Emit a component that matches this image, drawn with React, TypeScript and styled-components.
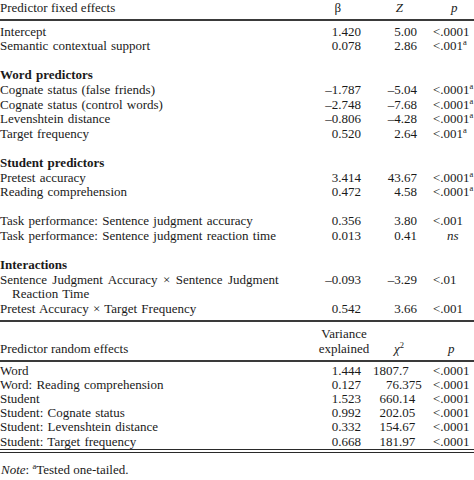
import React from "react";
import styled, { createGlobalStyle } from "styled-components";

const GlobalStyle = createGlobalStyle`
	html, body {
		margin: 0;
		padding: 0;
		background: #ffffff;
		overflow: hidden;
	}
	body {
		font-family: "Liberation Serif", "Times New Roman", serif;
		color: #1a1a1a;
	}
`;

type FixedRow =
	| { kind: "blank" }
	| { kind: "group"; label: string }
	| {
			kind: "item";
			label: string;
			cont?: string;
			beta: string;
			z: string;
			p: string;
			sup?: boolean;
			ns?: boolean;
	  };

const fixedRows: FixedRow[] = [
	{ kind: "item", label: "Intercept", beta: "1.420", z: "5.00", p: "<.0001" },
	{ kind: "item", label: "Semantic contextual support", beta: "0.078", z: "2.86", p: "<.001", sup: true },
	{ kind: "blank" },
	{ kind: "group", label: "Word predictors" },
	{ kind: "item", label: "Cognate status (false friends)", beta: "–1.787", z: "–5.04", p: "<.0001", sup: true },
	{ kind: "item", label: "Cognate status (control words)", beta: "–2.748", z: "–7.68", p: "<.0001", sup: true },
	{ kind: "item", label: "Levenshtein distance", beta: "–0.806", z: "–4.28", p: "<.0001", sup: true },
	{ kind: "item", label: "Target frequency", beta: "0.520", z: "2.64", p: "<.001", sup: true },
	{ kind: "blank" },
	{ kind: "group", label: "Student predictors" },
	{ kind: "item", label: "Pretest accuracy", beta: "3.414", z: "43.67", p: "<.0001", sup: true },
	{ kind: "item", label: "Reading comprehension", beta: "0.472", z: "4.58", p: "<.0001", sup: true },
	{ kind: "blank" },
	{ kind: "item", label: "Task performance: Sentence judgment accuracy", beta: "0.356", z: "3.80", p: "<.001" },
	{ kind: "item", label: "Task performance: Sentence judgment reaction time", beta: "0.013", z: "0.41", p: "ns", ns: true },
	{ kind: "blank" },
	{ kind: "group", label: "Interactions" },
	{
		kind: "item",
		label: "Sentence Judgment Accuracy × Sentence Judgment",
		cont: "Reaction Time",
		beta: "–0.093",
		z: "–3.29",
		p: "<.01",
	},
	{ kind: "item", label: "Pretest Accuracy × Target Frequency", beta: "0.542", z: "3.66", p: "<.001" },
];

const randomRows = [
	{ label: "Word", v: "1.444", chi: "1807.7" },
	{ label: "Word: Reading comprehension", v: "0.127", chi: "76.375" },
	{ label: "Student", v: "1.523", chi: "660.14" },
	{ label: "Student: Cognate status", v: "0.992", chi: "202.05" },
	{ label: "Student: Levenshtein distance", v: "0.332", chi: "154.67" },
	{ label: "Student: Target frequency", v: "0.668", chi: "181.97" },
];

const Page = styled.div`
	width: 480px;
	font-size: 13px;
	line-height: 14.6px;
`;

const Table = styled.table`
	width: 480px;
	table-layout: fixed;
	border-collapse: collapse;
	border-spacing: 0;
`;

const HeadRow = styled.tr<{ $tall?: boolean }>`
	border-bottom: 2px solid #3a3a3a;
	& > th {
		padding-top: ${({ $tall }) => ($tall ? "5px" : "1px")};
		padding-bottom: 3px;
	}
`;

const HeadCell = styled.th<{ $align?: "left" | "right" | "center"; $pad?: string }>`
	font-weight: normal;
	text-align: ${({ $align }) => $align ?? "left"};
	padding: ${({ $pad }) => $pad ?? "0"};
	vertical-align: bottom;
	white-space: nowrap;
	overflow: visible;
`;

const VarianceHead = styled.div`
	width: 60px;
	margin-left: 14px;
	text-align: center;
`;

const Italic = styled.i`
	font-style: italic;
`;

const Row = styled.tr<{ $top?: number; $bottom?: number; $pitch?: number }>`
	line-height: ${({ $pitch }) => $pitch ?? 14.6}px;
	& > td {
		height: ${({ $pitch }) => $pitch ?? 14.6}px;
		padding-top: ${({ $top }) => $top ?? 0}px;
		padding-bottom: ${({ $bottom }) => $bottom ?? 0}px;
	}
`;

const SectionEnd = styled.tbody<{ $double?: boolean }>`
	border-bottom: ${({ $double }) => ($double ? "4px double #2a2a2a" : "2px solid #3a3a3a")};
`;

const Label = styled.td<{ $bold?: boolean; $wide?: boolean }>`
	padding: 0;
	font-weight: ${({ $bold }) => ($bold ? "bold" : "normal")};
	white-space: nowrap;
	vertical-align: top;
	word-spacing: ${({ $wide }) => ($wide ? "2.2px" : "1px")};
`;

const Continuation = styled.div`
	padding-left: 12px;
	word-spacing: 1px;
`;

const Num = styled.td`
	padding: 0;
	text-align: right;
	white-space: nowrap;
	vertical-align: top;
`;

const PCell = styled.td<{ $ns?: boolean }>`
	padding: 0;
	padding-left: ${({ $ns }) => ($ns ? "30px" : "16px")};
	font-style: ${({ $ns }) => ($ns ? "italic" : "normal")};
	white-space: nowrap;
	vertical-align: top;
`;

const Sup = styled.sup`
	font-size: 8.5px;
	line-height: 0;
	vertical-align: 5px;
`;

const FracPart = styled.span`
	display: inline-block;
	width: 18px;
	text-align: left;
`;

const Note = styled.div`
	padding-top: 10px;
	padding-left: 1px;
	line-height: 14px;
`;

const Decimal = ({ value }: { value: string }) => {
	const [int, frac] = value.split(".");
	return (
		<Num>
			{int}
			<FracPart>.{frac}</FracPart>
		</Num>
	);
};

export default function App() {
	const lastItem = fixedRows.length - 1;
	const pad = (i: number, last: number, top: number, bottom: number) => ({
		$top: i === 0 ? top : 0,
		$bottom: i === last ? bottom : 0,
	});
	return (
		<Page>
			<GlobalStyle />
			<Table>
				<colgroup>
					<col style={{ width: 300 }} />
					<col style={{ width: 61 }} />
					<col style={{ width: 56 }} />
					<col style={{ width: 63 }} />
				</colgroup>
				<thead>
					<HeadRow>
						<HeadCell>Predictor fixed effects</HeadCell>
						<HeadCell $align="right" $pad="0 20px 0 0">
							β
						</HeadCell>
						<HeadCell $align="right" $pad="0 14px 0 0">
							<Italic>Z</Italic>
						</HeadCell>
						<HeadCell $pad="0 0 0 34px">
							<Italic>p</Italic>
						</HeadCell>
					</HeadRow>
				</thead>
				<SectionEnd>
					{fixedRows.map((r, i) => {
						const p = pad(i, lastItem, 4, 4);
						if (r.kind === "blank")
							return (
								<Row key={i} {...p}>
									<Label colSpan={4} />
								</Row>
							);
						if (r.kind === "group")
							return (
								<Row key={i} {...p}>
									<Label $bold colSpan={4}>
										{r.label}
									</Label>
								</Row>
							);
						return (
							<Row key={i} {...p}>
								<Label $wide={!!r.cont}>
									{r.label}
									{r.cont && <Continuation>{r.cont}</Continuation>}
								</Label>
								<Num>{r.beta}</Num>
								<Num>{r.z}</Num>
								<PCell $ns={r.ns}>
									{r.p}
									{r.sup && <Sup>a</Sup>}
								</PCell>
							</Row>
						);
					})}
				</SectionEnd>
				<tbody>
					<HeadRow $tall>
						<HeadCell>Predictor random effects</HeadCell>
						<HeadCell>
							<VarianceHead>
								Variance
								<br />
								explained
							</VarianceHead>
						</HeadCell>
						<HeadCell $align="right" $pad="0 13px 0 0">
							<Italic>χ</Italic>
							<Sup>2</Sup>
						</HeadCell>
						<HeadCell $pad="0 0 0 31px">
							<Italic>p</Italic>
						</HeadCell>
					</HeadRow>
				</tbody>
				<SectionEnd $double>
					{randomRows.map((r, i) => (
						<Row key={r.label} $pitch={14.2} {...pad(i, randomRows.length - 1, 2, 0)}>
							<Label>{r.label}</Label>
							<Num>{r.v}</Num>
							<Decimal value={r.chi} />
							<PCell>&lt;.0001</PCell>
						</Row>
					))}
				</SectionEnd>
			</Table>
			<Note>
				<Italic>Note</Italic>: <Sup>a</Sup>Tested one-tailed.
			</Note>
		</Page>
	);
}
